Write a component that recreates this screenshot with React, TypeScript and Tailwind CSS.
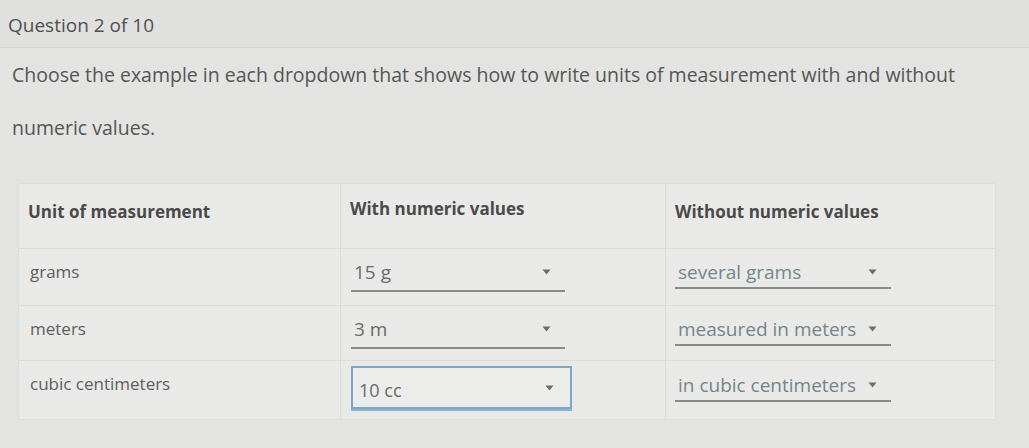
import React from 'react';

type Row = {
  unit: string;
  withVal: string;
  withoutVal: string;
  focused?: boolean;
  h: string;
};

const rows: Row[] = [
  { unit: 'grams', withVal: '15 g', withoutVal: 'several grams', h: 'h-[57px]' },
  { unit: 'meters', withVal: '3 m', withoutVal: 'measured in meters', h: 'h-[55px]' },
  { unit: 'cubic centimeters', withVal: '10 cc', withoutVal: 'in cubic centimeters', focused: true, h: 'h-[58px]' },
];

const Caret = () => (
  <svg width="9" height="6" viewBox="0 0 9 6" className="shrink-0">
    <path d="M0.5 0.5 L8.5 0.5 L4.5 5.5 Z" fill="#6d6d6d" />
  </svg>
);

const Dropdown: React.FC<{ value: string; focused?: boolean; tinted?: boolean; width: string; pb: string }> = ({
  value,
  focused,
  tinted,
  width,
  pb,
}) => {
  if (focused) {
    return (
      <div
        className={`${width} h-[43px] flex items-center justify-between pl-[6px] pr-[16px] border-2 border-[#7aa6cc] bg-[#ececea] shadow-[0_2px_0_#8fb3d3]`}
      >
        <span className="text-[18px] leading-[26px] text-[#6a6a6a] pt-[4px]">{value}</span>
        <Caret />
      </div>
    );
  }
  return (
    <div className={`${width} flex items-center justify-between gap-[6px] border-b-2 border-[#8a8a8a] ${pb} pl-[3px] pr-[14px]`}>
      <span className={`text-[19px] leading-[26px] whitespace-nowrap ${tinted ? 'text-[#74868c]' : 'text-[#6a6a6a]'}`}>{value}</span>
      <Caret />
    </div>
  );
};

export default function App() {
  return (
    <div
      className="w-[1029px] h-[448px] bg-[#e3e3e1] overflow-hidden text-[#4e4e4e]"
      style={{ fontFamily: '"Open Sans", "Noto Sans", sans-serif' }}
    >
      <div className="h-[48px] bg-[#e0e0de] border-b border-[#d4d4d2] flex items-center px-[8px] pt-[4px]">
        <span className="text-[19px] text-[#505050]">Question 2 of 10</span>
      </div>

      <div className="px-[12px]">
        <p className="text-[19.5px] leading-[53px] text-[#555]">
          Choose the example in each dropdown that shows how to write units of measurement with and without
          <br />
          numeric values.
        </p>
      </div>

      <div className="ml-[18px] mt-[29px] w-[978px] bg-[#e9e9e7] border border-[#dcdcda]">
        <div className="grid grid-cols-[322px_325px_1fr] h-[65px] border-b border-[#dcdcda]">
          <div className="pl-[9px] pt-[16px] border-r border-[#dcdcda]">
            <span className="text-[17px] leading-[23px] font-bold text-[#4a4a4a]">Unit of measurement</span>
          </div>
          <div className="pl-[9px] pt-[13px] border-r border-[#dcdcda]">
            <span className="text-[17px] leading-[23px] font-bold text-[#4a4a4a]">With numeric values</span>
          </div>
          <div className="pl-[9px] pt-[16px]">
            <span className="text-[17px] leading-[23px] font-bold text-[#4a4a4a]">Without numeric values</span>
          </div>
        </div>

        {rows.map((r, i) => (
          <div
            key={r.unit}
            className={`grid grid-cols-[322px_325px_1fr] ${r.h} ${i === 2 ? '' : 'border-b border-[#dcdcda]'}`}
          >
            <div className="pt-[11px] pl-[11px] border-r border-[#dcdcda]">
              <span className="text-[17px] leading-[23px] text-[#5e5e5e]">{r.unit}</span>
            </div>
            <div className={`pl-[10px] border-r border-[#dcdcda] ${r.focused ? 'pt-[5px]' : 'pt-[10px]'}`}>
              <Dropdown value={r.withVal} focused={r.focused} width={r.focused ? 'w-[221px]' : 'w-[214px]'} pb="pb-[5px]" />
            </div>
            <div className={`pl-[9px] ${r.focused ? 'pt-[11px]' : 'pt-[10px]'}`}>
              <Dropdown value={r.withoutVal} tinted width="w-[216px]" pb="pb-[2px]" />
            </div>
          </div>
        ))}
      </div>
    </div>
  );
}
